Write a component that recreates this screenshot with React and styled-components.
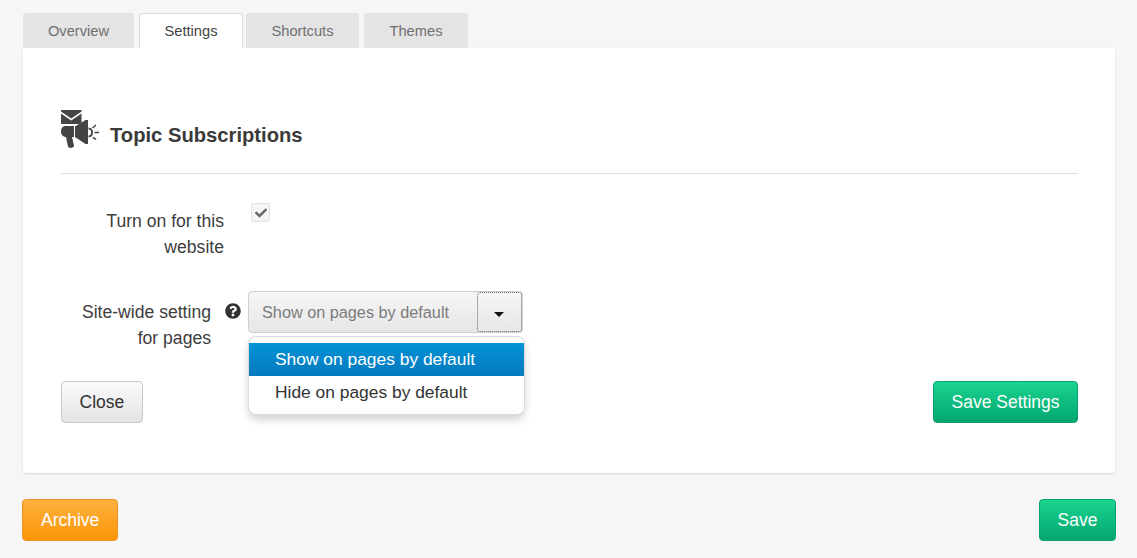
import React from 'react';
import styled, { createGlobalStyle } from 'styled-components';
import { FaCheck, FaQuestionCircle } from 'react-icons/fa';

const GlobalStyle = createGlobalStyle`
	html, body {
		margin: 0;
		padding: 0;
		background: #f6f6f6;
		font-family: 'Liberation Sans', Arial, sans-serif;
		color: #333;
	}
`;

const Page = styled.div`
	padding: 13px 21px 17px 22px;
`;

const TabBar = styled.div`
	display: flex;
	margin-left: 1px;
	height: 35px;
`;

const Tab = styled.div`
	width: ${({ $width }) => $width}px;
	margin-right: ${({ $gap }) => $gap}px;
	box-sizing: border-box;
	display: flex;
	align-items: center;
	justify-content: center;
	font-size: 14.7px;
	border-radius: 3px 3px 0 0;
	background: ${({ $active }) => ($active ? '#fff' : '#e4e4e4')};
	color: ${({ $active }) => ($active ? '#444' : '#6f6f6f')};
	border: 1px solid ${({ $active }) => ($active ? '#dcdcdc' : '#e4e4e4')};
	border-bottom: none;
`;

const Panel = styled.div`
	margin: 0 1px;
	background: #fff;
	border-radius: 0 0 4px 4px;
	box-shadow: 0 1px 2px rgba(0, 0, 0, 0.14);
	padding: 62px 37px 50px 38px;
`;

const Heading = styled.div`
	display: flex;
	align-items: center;
	gap: 11px;
	height: 38px;
	padding-bottom: 25px;
	border-bottom: 1px solid #dedede;
	margin-bottom: 30px;
`;

const HeadingText = styled.h2`
	margin: 12px 0 0;
	font-size: 20.2px;
	font-weight: bold;
	color: #3a3a3a;
`;

const Row = styled.div`
	display: flex;
	align-items: flex-start;
	margin-bottom: ${({ $bottom }) => $bottom}px;
`;

const Label = styled.div`
	width: ${({ $width }) => $width}px;
	padding-top: ${({ $top }) => $top}px;
	font-size: 17.6px;
	line-height: 26px;
	text-align: right;
	color: #3d3d3d;
`;

const CheckBox = styled.div`
	width: 19px;
	height: 19px;
	margin: -1px 0 0 27px;
	box-sizing: border-box;
	border: 1px solid #e0e0e0;
	border-radius: 2px;
	background: #f5f5f5;
	color: #666;
	display: flex;
	align-items: center;
	justify-content: center;
	font-size: 12px;
`;

const HelpIcon = styled.span`
	display: flex;
	margin: 12px 7px 0 14px;
	color: #333;
	font-size: 16px;
`;

const SelectWrap = styled.div`
	position: relative;
	width: 275px;
`;

const SelectBox = styled.div`
	display: flex;
	height: 42px;
	box-sizing: border-box;
	border: 1px solid #cfcfcf;
	border-radius: 4px;
	background: linear-gradient(#f6f6f6, #e6e6e6);
`;

const SelectValue = styled.div`
	flex: 1;
	display: flex;
	align-items: center;
	padding-left: 13px;
	font-size: 16.25px;
	color: #7b7b7b;
`;

const CaretButton = styled.div`
	width: 45px;
	display: flex;
	align-items: center;
	justify-content: center;
	box-sizing: border-box;
	border: 1px dotted #666;
	border-radius: 3px;
`;

const Caret = styled.span`
	width: 0;
	height: 0;
	margin: 4px 2px 0 0;
	border-left: 5px solid transparent;
	border-right: 5px solid transparent;
	border-top: 5px solid #111;
`;

const Menu = styled.div`
	position: absolute;
	top: 46px;
	left: 1px;
	width: 275px;
	box-sizing: border-box;
	padding: 6px 0 5px;
	background: #fff;
	border-radius: 7px;
	box-shadow: 0 0 0 1px #dcdcdc, 0 5px 10px rgba(0, 0, 0, 0.2);
	z-index: 2;
`;

const MenuItem = styled.div`
	height: 33px;
	padding-left: 26px;
	display: flex;
	align-items: center;
	font-size: 17.4px;
	color: ${({ $selected }) => ($selected ? '#fff' : '#333')};
	background: ${({ $selected }) => ($selected ? 'linear-gradient(#0492d8, #0479bb)' : 'transparent')};
`;

const ButtonRow = styled.div`
	display: flex;
	justify-content: space-between;
`;

const Button = styled.button`
	height: 42px;
	padding: 1px ${({ $pad }) => $pad}px 0;
	box-sizing: border-box;
	font-family: inherit;
	font-size: 17.5px;
	border-radius: 4px;
	color: ${({ $tone }) => ($tone === 'plain' ? '#333' : '#fff')};
	border: 1px solid ${({ $tone }) => ({ plain: '#c9c9c9', green: '#07a06e', orange: '#ec9320' }[$tone])};
	background: ${({ $tone }) =>
		({
			plain: 'linear-gradient(#fafafa, #e4e4e4)',
			green: 'linear-gradient(#1ad48f, #03a670)',
			orange: 'linear-gradient(#fdb040, #fb9606)'
		}[$tone])};
`;

const Footer = styled.div`
	display: flex;
	justify-content: space-between;
	margin-top: 26px;
`;

const SubscriptionIcon = () => (
	<svg width="38" height="38" viewBox="0 0 38 38" fill="#444">
		<path d="M0 0h20.500v1.500L10.250 8.500 0 1.500z" />
		<path d="M0 3.500l10.250 7 10.250-7V14H0z" />
		<path d="M4 16h9v11h-2l2 8.500c.4 2.500-5 3.500-6 1L5 27c-3 0-5-2.500-5-5.500S1.500 16 4 16z" />
		<path d="M14 16.500L24.500 10H27v24h-2.500L14 27z" />
		<path d="M27.500 17.500c3 .3 4.500 2.300 4.500 5s-1.500 4.700-4.500 5v-1.800c1.800-.3 2.700-1.500 2.700-3.200s-.9-2.900-2.700-3.200z" />
		<path d="M31 17.500l3.500-3 .9 1-3.500 3zM33.500 21.800H38v1.400h-4.500zM32 26.800l3.500 2-.7 1.200-3.500-2z" />
	</svg>
);

const App = () => {
	return (
		<Page>
			<GlobalStyle />
			<TabBar>
				<Tab $width={111} $gap={5}>Overview</Tab>
				<Tab $width={104} $gap={3} $active>Settings</Tab>
				<Tab $width={113} $gap={5}>Shortcuts</Tab>
				<Tab $width={104} $gap={0}>Themes</Tab>
			</TabBar>
			<Panel>
				<Heading>
					<SubscriptionIcon />
					<HeadingText>Topic Subscriptions</HeadingText>
				</Heading>
				<Row $bottom={31}>
					<Label $width={163} $top={4}>Turn on for this website</Label>
					<CheckBox><FaCheck /></CheckBox>
				</Row>
				<Row $bottom={30}>
					<Label $width={150} $top={8}>Site-wide setting for pages</Label>
					<HelpIcon><FaQuestionCircle /></HelpIcon>
					<SelectWrap>
						<SelectBox>
							<SelectValue>Show on pages by default</SelectValue>
							<CaretButton><Caret /></CaretButton>
						</SelectBox>
						<Menu>
							<MenuItem $selected>Show on pages by default</MenuItem>
							<MenuItem>Hide on pages by default</MenuItem>
						</Menu>
					</SelectWrap>
				</Row>
				<ButtonRow>
					<Button $tone="plain" $pad={17.5}>Close</Button>
					<Button $tone="green" $pad={17.5}>Save Settings</Button>
				</ButtonRow>
			</Panel>
			<Footer>
				<Button $tone="orange" $pad={18}>Archive</Button>
				<Button $tone="green" $pad={17.5}>Save</Button>
			</Footer>
		</Page>
	);
};

export default App;
